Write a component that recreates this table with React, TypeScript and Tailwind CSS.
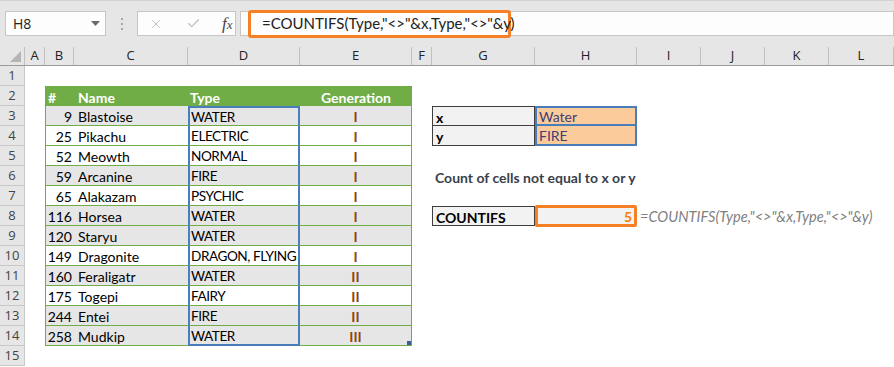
import { X, Check } from 'lucide-react';

type Pokemon = { no: number; name: string; type: string; gen: string };

const POKEMON: Pokemon[] = [
  { no: 9, name: 'Blastoise', type: 'WATER', gen: 'I' },
  { no: 25, name: 'Pikachu', type: 'ELECTRIC', gen: 'I' },
  { no: 52, name: 'Meowth', type: 'NORMAL', gen: 'I' },
  { no: 59, name: 'Arcanine', type: 'FIRE', gen: 'I' },
  { no: 65, name: 'Alakazam', type: 'PSYCHIC', gen: 'I' },
  { no: 116, name: 'Horsea', type: 'WATER', gen: 'I' },
  { no: 120, name: 'Staryu', type: 'WATER', gen: 'I' },
  { no: 149, name: 'Dragonite', type: 'DRAGON, FLYING', gen: 'I' },
  { no: 160, name: 'Feraligatr', type: 'WATER', gen: 'II' },
  { no: 175, name: 'Togepi', type: 'FAIRY', gen: 'II' },
  { no: 244, name: 'Entei', type: 'FIRE', gen: 'II' },
  { no: 258, name: 'Mudkip', type: 'WATER', gen: 'III' },
];

const FORMULA = '=COUNTIFS(Type,"<>"&x,Type,"<>"&y)';

function RowHead({ n }: { n: number }) {
  return (
    <div className="w-[25px] shrink-0 h-full bg-[#e6e6e6] border-r border-b border-[#c8c8c8] flex items-center justify-center text-[13px] text-[#444] font-['Open_Sans',sans-serif]">
      {n}
    </div>
  );
}

// G..L columns to the right of the table
function RightCells({ n }: { n: number }) {
  let g = <div className="w-[103px] shrink-0" />;
  let h = <div className="w-[102px] shrink-0" />;
  let i = <div className="w-[64px] shrink-0" />;

  if (n === 3) {
    g = <div className="w-[103px] shrink-0 bg-[#f2f2f2] border border-[#3f3f3f] font-bold pl-[3px] pt-[2px] flex items-center">x</div>;
    h = <div className="w-[102px] shrink-0 bg-[#fccb9b] border-2 border-[#4a7ebb] text-[#3f3f76] pl-[2px] pt-[1px] flex items-center">Water</div>;
  }
  if (n === 4) {
    g = <div className="w-[103px] shrink-0 bg-[#f2f2f2] border-x border-b border-[#3f3f3f] font-bold pl-[3px] pt-[1px] flex items-center">y</div>;
    h = <div className="w-[102px] shrink-0 bg-[#fccb9b] border-x-2 border-b-2 border-[#4a7ebb] text-[#3f3f76] pl-[2px] flex items-center">FIRE</div>;
  }
  if (n === 6) {
    g = (
      <div className="w-[103px] shrink-0 pl-[3px] pt-[2px] flex items-center whitespace-nowrap font-bold text-[#3a3f4b]">
        Count of cells not equal to x or y
      </div>
    );
  }
  if (n === 8) {
    g = <div className="w-[103px] shrink-0 bg-[#f2f2f2] border border-[#3f3f3f] font-bold pl-[3px] pt-[2px] flex items-center">COUNTIFS</div>;
    h = (
      <div className="w-[102px] shrink-0 -mt-[1px] h-[22px] bg-[#f2f2f2] border-[3px] border-[#f58025] rounded-[2px] flex items-center justify-end pr-[2px] pt-[1px] font-bold text-[#fa7d00]">
        5
      </div>
    );
    i = (
      <div className="w-[64px] shrink-0 pl-[3px] pt-[2px] flex items-center whitespace-nowrap italic text-[14.6px] text-[#7f7f7f]">
        {FORMULA}
      </div>
    );
  }

  return (
    <>
      {g}
      {h}
      {i}
      <div className="w-[64px] shrink-0" />
      <div className="w-[64px] shrink-0" />
      <div className="flex-1" />
    </>
  );
}

export default function App() {
  return (
    <div className="w-[894px] h-[367px] overflow-hidden bg-white font-['Lato',sans-serif] text-[14px] text-black">
      {/* formula bar */}
      <div className="h-[47px] bg-[#e6e6e6] border-t border-[#d2d2d2] flex items-start pt-[10px]">
        <div className="ml-[5px] w-[101px] h-[25px] bg-[#fdfdfd] border border-[#c6c6c6] flex items-center justify-between pl-[7px] pr-[5px] text-[14px] text-[#222] font-['Open_Sans',sans-serif]">
          <span>H8</span>
          <svg width="9" height="5" viewBox="0 0 9 5">
            <path d="M0 0h9L4.5 5z" fill="#6a6a6a" />
          </svg>
        </div>
        <div className="w-[31px] h-[25px] flex flex-col items-center justify-center gap-[3px]">
          <span className="w-[2px] h-[2px] bg-[#a8a8a8]" />
          <span className="w-[2px] h-[2px] bg-[#a8a8a8]" />
          <span className="w-[2px] h-[2px] bg-[#a8a8a8]" />
        </div>
        <div className="w-[99px] h-[25px] bg-[#fdfdfd] border border-[#c6c6c6] flex items-center pl-[11px]">
          <X size={14} strokeWidth={1.6} color="#bcbcbc" />
          <Check size={15} strokeWidth={1.8} color="#bcbcbc" className="ml-[23px]" />
          <span className="ml-[21px] italic font-['Liberation_Serif',serif] text-[17px] text-[#444] leading-none">
            f<span className="text-[13px]">x</span>
          </span>
        </div>
        <div className="ml-[4px] flex-1 h-[25px] bg-[#fdfdfd] border border-[#c6c6c6] flex items-center pl-[7px]">
          <div className="w-[263px] h-[28px] shrink-0 border-[3px] border-[#f58025] rounded-[3px] bg-[#fdfdfd] flex items-center pl-[11px] text-[15px] text-[#222] whitespace-nowrap">
            {FORMULA}
          </div>
        </div>
      </div>

      {/* column headers */}
      <div className="flex h-[19px] bg-[#e6e6e6] border-b border-[#9b9b9b] text-[13px] text-[#222] font-['Open_Sans',sans-serif]">
        <div className="w-[25px] shrink-0 border-r border-[#c0c0c0] flex items-end justify-end pr-[3px] pb-[3px]">
          <svg width="11" height="11" viewBox="0 0 11 11">
            <path d="M11 0v11H0z" fill="#b4b4b4" />
          </svg>
        </div>
        <div className="w-[20px] shrink-0 border-r border-[#c0c0c0] flex items-center justify-center">A</div>
        <div className="w-[29px] shrink-0 border-r border-[#c0c0c0] flex items-center justify-center">B</div>
        <div className="w-[114px] shrink-0 border-r border-[#c0c0c0] flex items-center justify-center">C</div>
        <div className="w-[112px] shrink-0 border-r border-[#c0c0c0] flex items-center justify-center">D</div>
        <div className="w-[112px] shrink-0 border-r border-[#c0c0c0] flex items-center justify-center">E</div>
        <div className="w-[20px] shrink-0 border-r border-[#c0c0c0] flex items-center justify-center">F</div>
        <div className="w-[103px] shrink-0 border-r border-[#c0c0c0] flex items-center justify-center">G</div>
        <div className="w-[102px] shrink-0 border-r border-[#c0c0c0] flex items-center justify-center">H</div>
        <div className="w-[64px] shrink-0 border-r border-[#c0c0c0] flex items-center justify-center">I</div>
        <div className="w-[64px] shrink-0 border-r border-[#c0c0c0] flex items-center justify-center">J</div>
        <div className="w-[64px] shrink-0 border-r border-[#c0c0c0] flex items-center justify-center">K</div>
        <div className="flex-1 border-r border-[#c0c0c0] flex items-center justify-center">L</div>
      </div>

      {/* row 1 */}
      <div className="flex h-[20px]">
        <RowHead n={1} />
      </div>

      {/* row 2: table header */}
      <div className="flex h-[20px]">
        <RowHead n={2} />
        <div className="w-[20px] shrink-0" />
        <div className="w-[29px] shrink-0 bg-[#70ad47] text-white font-bold pl-[3px] pt-[2px] flex items-center">#</div>
        <div className="w-[114px] shrink-0 bg-[#70ad47] text-white font-bold pl-[4px] pt-[2px] flex items-center">Name</div>
        <div className="w-[112px] shrink-0 bg-[#70ad47] text-white font-bold pl-[2px] pt-[2px] flex items-center">Type</div>
        <div className="w-[112px] shrink-0 bg-[#70ad47] text-white font-bold pt-[2px] flex items-center justify-center">Generation</div>
        <div className="w-[20px] shrink-0" />
        <RightCells n={2} />
      </div>

      {/* rows 3-14: data */}
      {POKEMON.map((p, idx) => {
        const n = idx + 3;
        const shaded = p.type === 'WATER' || p.type === 'FIRE';
        const bg = shaded ? 'bg-[#e7e6e6]' : 'bg-white';
        const first = idx === 0;
        const last = idx === POKEMON.length - 1;
        return (
          <div key={p.no} className="flex h-[20px]">
            <RowHead n={n} />
            <div className="w-[20px] shrink-0" />
            <div className={`w-[29px] shrink-0 ${bg} border-l border-b border-[#70ad47] pr-[2px] pt-[2px] flex items-center justify-end`}>
              {p.no}
            </div>
            <div className={`w-[114px] shrink-0 ${bg} border-b border-[#70ad47] pl-[4px] pt-[2px] flex items-center whitespace-nowrap`}>
              {p.name}
            </div>
            <div
              className={`w-[112px] shrink-0 ${bg} overflow-hidden border-x-2 border-x-[#4a7ebb] pl-[1px] pt-[2px] flex items-center whitespace-nowrap text-[13.6px] tracking-[-0.45px] ${
                last ? 'border-b-2 border-b-[#4a7ebb]' : 'border-b border-b-[#70ad47]'
              } ${first ? 'border-t-2 border-t-[#4a7ebb]' : ''}`}
            >
              {p.type}
            </div>
            <div className={`relative w-[112px] shrink-0 ${bg} border-r border-b border-[#70ad47] pt-[2px] flex items-center justify-center font-bold text-[#8f4510]`}>
              {p.gen}
              {last && <span className="absolute right-0 bottom-0 w-[4px] h-[4px] bg-[#3c5a9a]" />}
            </div>
            <div className="w-[20px] shrink-0" />
            <RightCells n={n} />
          </div>
        );
      })}

      {/* row 15 */}
      <div className="flex h-[20px]">
        <RowHead n={15} />
      </div>
    </div>
  );
}
